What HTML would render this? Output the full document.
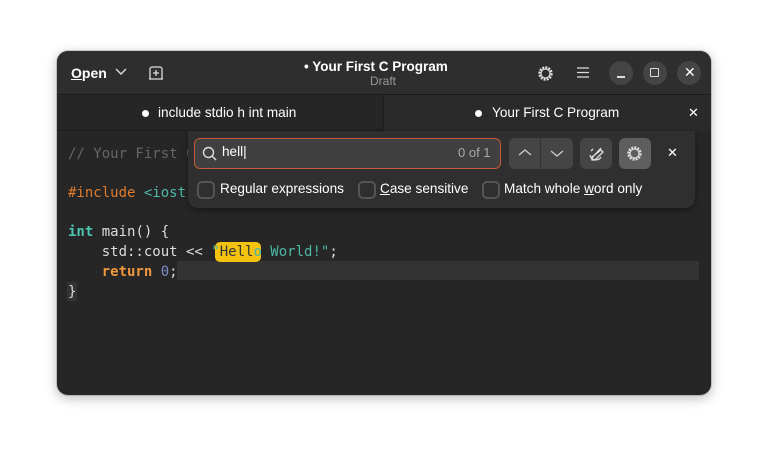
<!DOCTYPE html>
<html><head><style>
*{box-sizing:border-box;margin:0;padding:0}
body{width:768px;height:458px;background:#fff;position:relative;overflow:hidden;font-family:"Liberation Sans","DejaVu Sans",sans-serif;color:#fff}
.win{position:absolute;left:57px;top:51px;width:654px;height:344px;background:#262626;border-radius:11px;overflow:hidden;box-shadow:0 3px 12px rgba(0,0,0,.28),0 0 0 1px rgba(0,0,0,.15)}
.hdr{position:absolute;left:0;top:0;width:654px;height:44px;background:#2e2e2e;border-bottom:1px solid #1c1c1c}
.tabs{position:absolute;left:0;top:44px;width:654px;height:36px;background:#262626;border-bottom:1px solid #1c1c1c}
.t{position:absolute;font-size:13.6px;white-space:nowrap}
.code{position:absolute;font-family:"DejaVu Sans Mono",monospace;font-size:14px;white-space:pre;color:#ddd}
.btn{position:absolute;border-radius:50%;background:#444;width:24px;height:24px}
.pop{position:absolute;left:131px;top:80px;width:507px;height:77px;background:#2f2f2f;border-radius:0 0 10px 10px;box-shadow:0 2px 6px rgba(0,0,0,.4)}
.cb{position:absolute;width:18px;height:18px;border:2px solid #555;border-radius:5px;top:50px}
.sq{position:absolute;top:7px;height:31px;background:#454545;border-radius:6px}
</style></head><body>
<div class="win">
 <div class="hdr">
  <div class="t" style="left:14px;top:14px;font-weight:bold;font-size:14px"><u>O</u>pen</div>
  <svg style="position:absolute;left:58px;top:17px" width="12" height="8"><path d="M1 1l5 5 5-5" stroke="#ddd" stroke-width="1.4" fill="none"/></svg>
  <svg style="position:absolute;left:92px;top:15px" width="14" height="14"><path d="M1 13V3a2 2 0 0 1 2-2h8a2 2 0 0 1 2 2v10M7 4v6M4 7h6M0 13h14" stroke="#ddd" stroke-width="1.3" fill="none"/></svg>
  <div class="t" style="left:247px;top:8px;font-weight:bold;font-size:13.5px">• Your First C Program</div>
  <div class="t" style="left:313px;top:23px;font-size:12px;color:#999">Draft</div>
  <svg style="position:absolute;left:480px;top:14px" width="17" height="17"><circle cx="8.5" cy="8.5" r="6" stroke="#ddd" stroke-width="2.4" fill="none" stroke-dasharray="2 1.1"/><circle cx="8.5" cy="8.5" r="4.5" stroke="#ddd" stroke-width="1.2" fill="none"/></svg>
  <svg style="position:absolute;left:520px;top:16px" width="12" height="11"><path d="M0 1h12M0 5.5h12M0 10h12" stroke="#ddd" stroke-width="1.3"/></svg>
  <div class="btn" style="left:552px;top:10px"></div><div style="position:absolute;left:560px;top:25px;width:8px;height:1.5px;background:#ddd"></div>
  <div class="btn" style="left:586px;top:10px"></div><div style="position:absolute;left:593px;top:17px;width:9px;height:9px;border:1.5px solid #ddd;border-radius:1px"></div>
  <div class="btn" style="left:620px;top:10px"></div><div class="t" style="left:627px;top:13px;font-size:14px">✕</div>
 </div>
 <div class="tabs">
  <div style="position:absolute;left:326px;top:0;width:1px;height:36px;background:#1c1c1c"></div>
  <div style="position:absolute;left:327px;top:0;width:327px;height:36px;background:#2a2a2a"></div>
  <div style="position:absolute;left:85px;top:15px;width:7px;height:7px;border-radius:50%;background:#fff"></div>
  <div class="t" style="left:101px;top:10px">include stdio h int main</div>
  <div style="position:absolute;left:418px;top:15px;width:7px;height:7px;border-radius:50%;background:#fff"></div>
  <div class="t" style="left:435px;top:10px">Your First C Program</div>
  <div class="t" style="left:631px;top:10px;font-size:13px">✕</div>
 </div>
 <div class="code" style="left:11px;top:95px;color:#666">// Your First C</div>
 <div class="code" style="left:11px;top:134px;color:#e07b2c">#include <span style="color:#4cb8a6">&lt;iost</span></div>
 <div style="position:absolute;left:120px;top:210px;width:522px;height:19px;background:#333"></div>
 <div class="code" style="left:11px;top:173px"><span style="color:#4cc5b0;font-weight:bold">int</span> main() {</div>
 <div style="position:absolute;left:158px;top:191px;width:46px;height:20px;background:#f3c30f;border-radius:5px"></div>
 <div class="code" style="left:11px;top:193px">    std::cout &lt;&lt; <span style="color:#4cb8a6">"<span style="color:#333">Hell</span>o World!"</span>;</div>
 <div class="code" style="left:11px;top:213px">    <span style="color:#f0963c;font-weight:bold">return</span> <span style="color:#7c8fc8">0</span>;</div>
 <div style="position:absolute;left:10px;top:231px;width:10px;height:19px;background:#333"></div>
 <div class="code" style="left:11px;top:233px;">}</div>
 <div class="pop">
  <div style="position:absolute;left:6px;top:7px;width:307px;height:31px;background:#404040;border:1.5px solid #c45a34;border-radius:6px"></div>
  <svg style="position:absolute;left:14px;top:15px" width="16" height="16"><circle cx="6.5" cy="6.5" r="5" stroke="#ddd" stroke-width="1.4" fill="none"/><path d="M10 10l4 4" stroke="#ddd" stroke-width="1.4"/></svg>
  <div class="t" style="left:34px;top:13px">hell<span style="font-weight:normal">|</span></div>
  <div class="t" style="left:270px;top:14px;font-size:13px;color:#aaa">0 of 1</div>
  <div class="sq" style="left:321px;width:64px"></div><div style="position:absolute;left:352px;top:7px;width:1px;height:31px;background:#333"></div>
  <svg style="position:absolute;left:329px;top:17px" width="48" height="10"><path d="M2 7l6-5 6 5M34 3l6 5 6-5" stroke="#ccc" stroke-width="1.3" fill="none"/></svg>
  <div class="sq" style="left:392px;width:32px"></div>
  <svg style="position:absolute;left:400px;top:14px" width="17" height="17"><path d="M3 14L13 3M5 4l-2 2M2 10a6 6 0 0 0 11 2M13 5l2 2-8 8H4v-3z" stroke="#ddd" stroke-width="1.3" fill="none"/></svg>
  <div class="sq" style="left:431px;width:32px;background:#5e5e5e"></div>
  <svg style="position:absolute;left:438px;top:14px" width="17" height="17"><circle cx="8.5" cy="8.5" r="6" stroke="#ddd" stroke-width="2.4" fill="none" stroke-dasharray="2 1.1"/><circle cx="8.5" cy="8.5" r="4.5" stroke="#ddd" stroke-width="1.2" fill="none"/></svg>
  <div class="t" style="left:479px;top:14px;font-size:13px">✕</div>
  <div class="cb" style="left:9px"></div><div class="t" style="left:32px;top:50px">Re<u>g</u>ular expressions</div>
  <div class="cb" style="left:170px"></div><div class="t" style="left:192px;top:50px"><u>C</u>ase sensitive</div>
  <div class="cb" style="left:294px"></div><div class="t" style="left:316px;top:50px">Match whole <u>w</u>ord only</div>
 </div>
</div>
</body></html>
